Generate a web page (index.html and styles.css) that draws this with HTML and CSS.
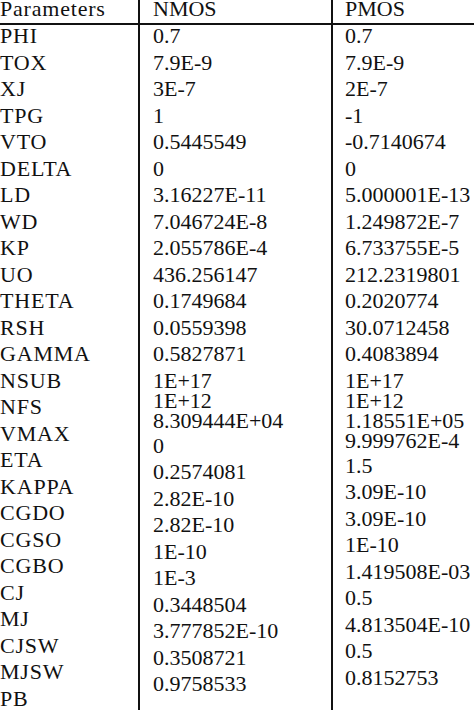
FILE: index.html
```html
<!DOCTYPE html>
<html>
<head>
<meta charset="utf-8">
<link rel="stylesheet" href="styles.css">
</head>
<body>
<div class="table">
  <div class="col col-param">
    <div class="head label">Parameters</div>
    <div class="body label">
      <div class="c">PHI</div>
      <div class="c">TOX</div>
      <div class="c">XJ</div>
      <div class="c">TPG</div>
      <div class="c">VTO</div>
      <div class="c">DELTA</div>
      <div class="c">LD</div>
      <div class="c">WD</div>
      <div class="c">KP</div>
      <div class="c">UO</div>
      <div class="c">THETA</div>
      <div class="c">RSH</div>
      <div class="c">GAMMA</div>
      <div class="c">NSUB</div>
      <div class="c">NFS</div>
      <div class="c">VMAX</div>
      <div class="c">ETA</div>
      <div class="c">KAPPA</div>
      <div class="c">CGDO</div>
      <div class="c">CGSO</div>
      <div class="c">CGBO</div>
      <div class="c">CJ</div>
      <div class="c">MJ</div>
      <div class="c">CJSW</div>
      <div class="c">MJSW</div>
      <div class="c">PB</div>
    </div>
  </div>
  <div class="col col-nmos">
    <div class="head">NMOS</div>
    <div class="body">
      <div class="c">0.7</div>
      <div class="c">7.9E-9</div>
      <div class="c">3E-7</div>
      <div class="c">1</div>
      <div class="c">0.5445549</div>
      <div class="c">0</div>
      <div class="c">3.16227E-11</div>
      <div class="c">7.046724E-8</div>
      <div class="c">2.055786E-4</div>
      <div class="c">436.256147</div>
      <div class="c">0.1749684</div>
      <div class="c">0.0559398</div>
      <div class="c">0.5827871</div>
      <div class="c s">1E+17</div>
      <div class="c s">1E+12</div>
      <div class="c g">8.309444E+04</div>
      <div class="c">0</div>
      <div class="c">0.2574081</div>
      <div class="c">2.82E-10</div>
      <div class="c">2.82E-10</div>
      <div class="c">1E-10</div>
      <div class="c">1E-3</div>
      <div class="c">0.3448504</div>
      <div class="c">3.777852E-10</div>
      <div class="c">0.3508721</div>
      <div class="c">0.9758533</div>
    </div>
  </div>
  <div class="col col-pmos">
    <div class="head">PMOS</div>
    <div class="body">
      <div class="c">0.7</div>
      <div class="c">7.9E-9</div>
      <div class="c">2E-7</div>
      <div class="c">-1</div>
      <div class="c">-0.7140674</div>
      <div class="c">0</div>
      <div class="c">5.000001E-13</div>
      <div class="c">1.249872E-7</div>
      <div class="c">6.733755E-5</div>
      <div class="c">212.2319801</div>
      <div class="c">0.2020774</div>
      <div class="c">30.0712458</div>
      <div class="c">0.4083894</div>
      <div class="c s">1E+17</div>
      <div class="c s">1E+12</div>
      <div class="c s">1.18551E+05</div>
      <div class="c g">9.999762E-4</div>
      <div class="c">1.5</div>
      <div class="c">3.09E-10</div>
      <div class="c">3.09E-10</div>
      <div class="c">1E-10</div>
      <div class="c">1.419508E-03</div>
      <div class="c">0.5</div>
      <div class="c">4.813504E-10</div>
      <div class="c">0.5</div>
      <div class="c">0.8152753</div>
    </div>
  </div>
</div>
</body>
</html>
```
FILE: styles.css
```css
html, body {
  margin: 0;
  padding: 0;
  background: #ffffff;
  overflow: hidden;
}

.table {
  display: grid;
  grid-template-columns: 140px 193px 1fr;
  width: 474px;
  height: 710px;
  font-family: "Liberation Serif", "Times New Roman", serif;
  font-size: 22px;
  color: #111111;
  white-space: nowrap;
  overflow: hidden;
}

.col {
  box-sizing: border-box;
  display: flex;
  flex-direction: column;
  overflow: hidden;
}

.col-param {
  border-right: 2px solid #111111;
}

.col-nmos {
  border-right: 2px solid #111111;
}

.head {
  flex: none;
  height: 23px;
  line-height: 18px;
  border-bottom: 2px solid #111111;
}

.col-nmos .head,
.col-nmos .body {
  padding-left: 13px;
}

.col-pmos .head,
.col-pmos .body {
  padding-left: 12px;
}

.label {
  letter-spacing: 0.8px;
}

.body {
  flex: none;
  display: flex;
  flex-direction: column;
}

.c {
  height: 26.5px;
  line-height: 22.5px;
  flex: none;
}

.c.s {
  height: 20px;
}

.c.g {
  height: 25px;
}
```
